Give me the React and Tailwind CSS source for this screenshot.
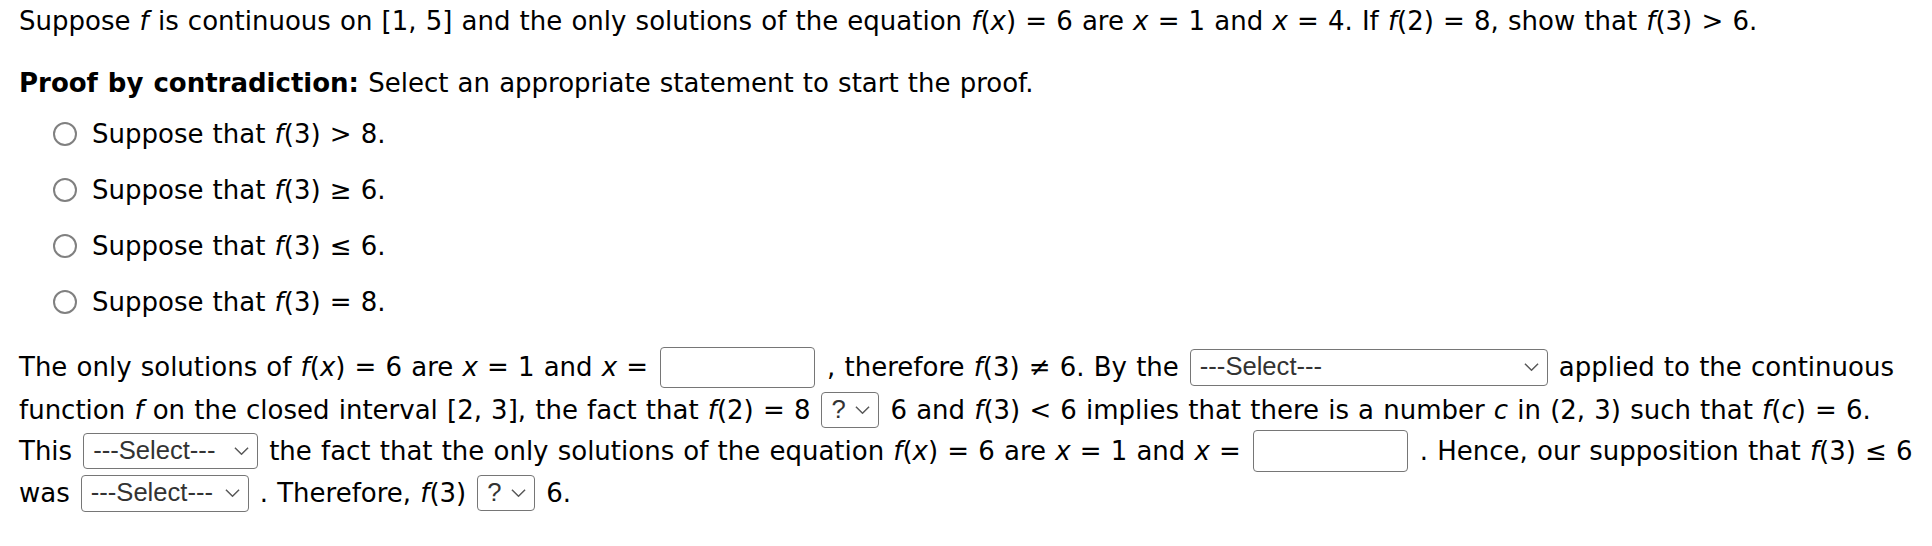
import React from 'react';

const Chevron = () => (
    <svg
        viewBox="0 0 16 9"
        className="pointer-events-none absolute right-[9px] top-1/2 h-[9px] w-[15px] -translate-y-1/2"
        fill="none"
        stroke="#5a5a5a"
        strokeWidth="1.6"
    >
        <path d="M1 1 L8 8 L15 1" />
    </svg>
);

// native select with the chevron drawn over it
const Select = ({ width, height = 'h-[36px]', label = '---Select---' }) => (
    <span className={`relative mx-[11px] inline-flex shrink-0 ${width} ${height}`}>
        <select
            defaultValue=""
            className="h-full w-full appearance-none rounded-[4px] border-[1.6px] border-[#767676] bg-white pl-[9px] pr-[28px] font-['Liberation_Sans',Arial,sans-serif] text-[25.6px] leading-none text-[#333] [word-spacing:0]"
        >
            <option value="">{label}</option>
        </select>
        <Chevron />
    </span>
);

const Blank = ({ height = 'h-[41px]' }) => (
    <input
        type="text"
        className={`mx-[12px] w-[155px] shrink-0 rounded-[4px] border-[1.6px] border-[#767676] bg-white ${height}`}
    />
);

const options = [
    <>Suppose that <i>f</i>(3) &gt; 8.</>,
    <>Suppose that <i>f</i>(3) ≥ 6.</>,
    <>Suppose that <i>f</i>(3) ≤ 6.</>,
    <>Suppose that <i>f</i>(3) = 8.</>,
];

export default function App() {
    return (
        <div className="min-h-screen w-full bg-white pl-[19px] font-['DejaVu_Sans',Verdana,sans-serif] text-[26px] text-black [word-spacing:0.9px]">
            <p className="whitespace-nowrap leading-[42px]">
                Suppose <i>f</i> is continuous on [1, 5] and the only solutions of the equation <i>f</i>(<i>x</i>) = 6 are <i>x</i> = 1 and <i>x</i> = 4. If <i>f</i>(2) = 8, show that <i>f</i>(3) &gt; 6.
            </p>

            <p className="mt-[20px] whitespace-nowrap leading-[42px]">
                <b>Proof by contradiction:</b> Select an appropriate statement to start the proof.
            </p>

            {/* radio choices */}
            <div className="mt-[9px] flex flex-col gap-[14px] pl-[34px]">
                {options.map((text, i) => (
                    <label key={i} className="flex h-[42px] items-center gap-[15px] whitespace-nowrap">
                        <input
                            type="radio"
                            name="start"
                            className="h-[24px] w-[24px] shrink-0 appearance-none rounded-full border-[2px] border-[#808080] bg-white"
                        />
                        <span>{text}</span>
                    </label>
                ))}
            </div>

            {/* fill-in proof */}
            <div className="mt-[22px] flex flex-col whitespace-nowrap">
                <div className="flex h-[44px] items-center">
                    <span>The only solutions of <i>f</i>(<i>x</i>) = 6 are <i>x</i> = 1 and <i>x</i> =</span>
                    <Blank />
                    <span>, therefore <i>f</i>(3) ≠ 6. By the</span>
                    <Select width="w-[358px]" height="h-[37px]" />
                    <span>applied to the continuous</span>
                </div>
                <div className="flex h-[42px] items-center">
                    <span>function <i>f</i> on the closed interval [2, 3], the fact that <i>f</i>(2) = 8</span>
                    <Select width="w-[58px]" label="?" />
                    <span>6 and <i>f</i>(3) &lt; 6 implies that there is a number <i>c</i> in (2, 3) such that <i>f</i>(<i>c</i>) = 6.</span>
                </div>
                <div className="flex h-[40px] items-center">
                    <span>This</span>
                    <Select width="w-[175px]" />
                    <span>the fact that the only solutions of the equation <i>f</i>(<i>x</i>) = 6 are <i>x</i> = 1 and <i>x</i> =</span>
                    <Blank height="h-[42px]" />
                    <span>. Hence, our supposition that <i>f</i>(3) ≤ 6</span>
                </div>
                <div className="flex h-[44px] items-center">
                    <span>was</span>
                    <Select width="w-[168px]" height="h-[37px]" />
                    <span>. Therefore, <i>f</i>(3)</span>
                    <Select width="w-[58px]" label="?" />
                    <span>6.</span>
                </div>
            </div>
        </div>
    );
}
